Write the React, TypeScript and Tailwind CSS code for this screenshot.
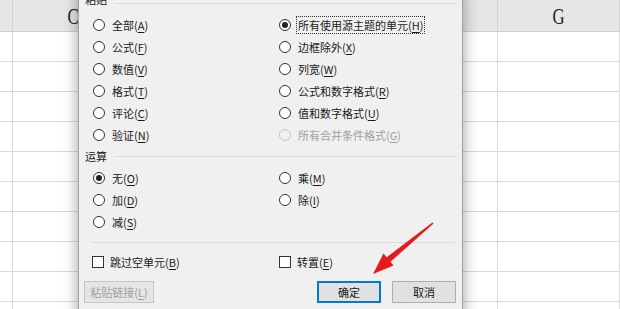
import React from "react";

const font = "font-['Microsoft_YaHei','Noto_Sans_CJK_SC',sans-serif]";

function Mn({ t, k, disabled }: { t: string; k: string; disabled?: boolean }) {
  return (
    <span className={disabled ? "text-[#a0a0a0]" : "text-[#1a1a1a]"}>
      {t}(<span className="underline underline-offset-2">{k}</span>)
    </span>
  );
}

function Radio({ checked, disabled }: { checked?: boolean; disabled?: boolean }) {
  return (
    <span
      className={
        "w-[12px] h-[12px] rounded-full border flex items-center justify-center shrink-0 " +
        (disabled ? "border-[#c4c4c4] bg-[#f0f0f0]" : "border-[#333333] bg-white")
      }
    >
      {checked && <span className="w-[6px] h-[6px] rounded-full bg-[#222]" />}
    </span>
  );
}

function RadioItem({
  t,
  k,
  checked,
  disabled,
  focus,
}: {
  t: string;
  k: string;
  checked?: boolean;
  disabled?: boolean;
  focus?: boolean;
}) {
  return (
    <div className="h-[22px] flex items-center">
      <Radio checked={checked} disabled={disabled} />
      <span
        className={
          "ml-[5px] leading-[16px] px-[1px] " +
          (focus ? "border border-dotted border-[#333]" : "border border-transparent")
        }
      >
        <Mn t={t} k={k} disabled={disabled} />
      </span>
    </div>
  );
}

function Check({ t, k }: { t: string; k: string }) {
  return (
    <div className="h-[22px] flex items-center">
      <span className="w-[12px] h-[12px] border border-[#333] bg-white shrink-0" />
      <span className="ml-[6px]">
        <Mn t={t} k={k} />
      </span>
    </div>
  );
}

function GroupHeader({ label, h, lift }: { label: string; h: string; lift?: boolean }) {
  return (
    <div className={"flex items-center pl-[6px] pr-[5px] " + h}>
      <span className={"text-[#1a1a1a] " + (lift ? "mb-[7px]" : "")}>{label}</span>
      <span className="flex-1 h-px bg-[#dcdcdc] ml-[7px]" />
    </div>
  );
}

export default function App() {
  const widths = ["w-[13px]", "w-[121px]", "w-[121px]", "w-[121px]", "w-[122px]", "w-[122px]"];
  const headers = ["", "C", "D", "E", "F", "G"];
  const rows = Array.from({ length: 10 });

  const left: [string, string][] = [
    ["全部", "A"],
    ["公式", "F"],
    ["数值", "V"],
    ["格式", "T"],
    ["评论", "C"],
    ["验证", "N"],
  ];
  const right: [string, string, boolean?, boolean?][] = [
    ["所有使用源主题的单元", "H", true],
    ["边框除外", "X"],
    ["列宽", "W"],
    ["公式和数字格式", "R"],
    ["值和数字格式", "U"],
    ["所有合并条件格式", "G", false, true],
  ];

  return (
    <div className="relative w-[620px] h-[309px] overflow-hidden bg-white">
      {/* spreadsheet */}
      <div className="flex flex-col">
        <div className="flex h-[32px] bg-[#e6e6e6] border-b border-[#d0d0d0]">
          {headers.map((h, i) => (
            <div
              key={i}
              className={
                widths[i] +
                " shrink-0 border-r border-[#d4d4d4] flex items-center justify-center font-['Liberation_Serif',serif] text-[24px] text-[#1b1b2a]"
              }
            >
              <span className="scale-x-[0.7] inline-block">{h}</span>
            </div>
          ))}
        </div>
        {rows.map((_, r) => (
          <div key={r} className="flex h-[30px] border-b border-[#d9d9d9]">
            {widths.map((w, i) => (
              <div key={i} className={w + " shrink-0 border-r border-[#d9d9d9]"} />
            ))}
          </div>
        ))}
      </div>

      {/* dialog */}
      <div
        className={
          "absolute left-[78px] top-[-8px] w-[385px] h-[340px] bg-[#f0f0f0] border-x border-[#a3a3a3] shadow-[0_0_14px_rgba(0,0,0,0.38)] text-[11px] " +
          font
        }
      >
        <div className="flex flex-col">
          <GroupHeader label="粘贴" h="h-[22px]" lift />
          <div className="flex">
            <div className="w-[200px] pl-[14px] flex flex-col">
              {left.map(([t, k]) => (
                <RadioItem key={k} t={t} k={k} />
              ))}
            </div>
            <div className="flex flex-col">
              {right.map(([t, k, c, d]) => (
                <RadioItem key={k} t={t} k={k} checked={c} disabled={d} focus={k === "H"} />
              ))}
            </div>
          </div>
          <GroupHeader label="运算" h="h-[21px]" />
          <div className="flex">
            <div className="w-[200px] pl-[14px] flex flex-col">
              <RadioItem t="无" k="O" checked />
              <RadioItem t="加" k="D" />
              <RadioItem t="减" k="S" />
            </div>
            <div className="flex flex-col">
              <RadioItem t="乘" k="M" />
              <RadioItem t="除" k="I" />
            </div>
          </div>
          <div className="mt-[9px] ml-[12px] mr-[7px] h-px bg-[#dcdcdc]" />
          <div className="mt-[8px] flex">
            <div className="w-[200px] pl-[13px]">
              <Check t="跳过空单元" k="B" />
            </div>
            <Check t="转置" k="E" />
          </div>
          <div className="mt-[8px] flex items-center pl-[5px] pr-[6px]">
            <button className="w-[70px] h-[22px] border border-[#c6c6c6] bg-[#e5e5e5] text-[#a0a0a0] flex items-center justify-center">
              粘贴链接(<span className="underline underline-offset-2">L</span>)
            </button>
            <div className="flex-1" />
            <button className="w-[64px] h-[22px] border-2 border-[#0078d7] bg-[#e1e1e1] text-[#1a1a1a] flex items-center justify-center">
              确定
            </button>
            <button className="ml-[11px] w-[64px] h-[22px] border border-[#adadad] bg-[#e1e1e1] text-[#1a1a1a] flex items-center justify-center">
              取消
            </button>
          </div>
        </div>
      </div>

      {/* red arrow annotation */}
      <svg className="absolute left-0 top-0" width="620" height="309" viewBox="0 0 620 309">
        <polygon points="433.6,223.4 432.4,222.6 386,257.8 390,262.2" fill="#e8191b" />
        <polygon points="373,274 393.5,265.5 383.5,253.5" fill="#e8191b" />
      </svg>
    </div>
  );
}
